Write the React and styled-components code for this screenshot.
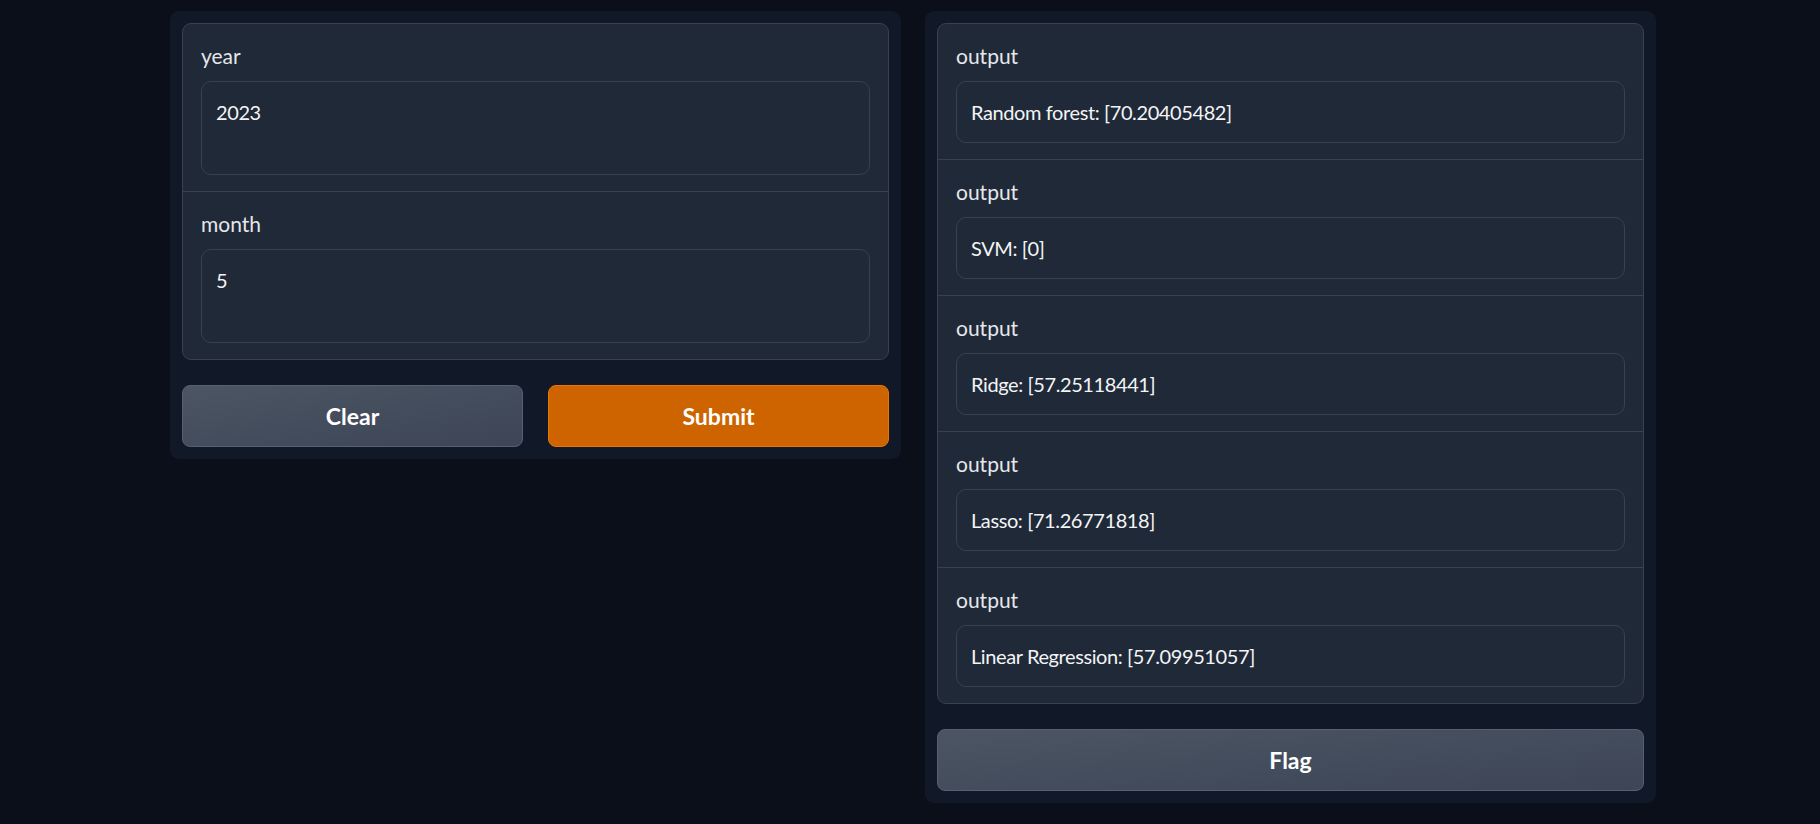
import React from 'react'
import styled, { createGlobalStyle } from 'styled-components'

const GlobalStyle = createGlobalStyle`
  html, body {
    margin: 0;
    padding: 0;
    background: #0b0f19;
    font-family: "Lato", "Open Sans", sans-serif;
  }
  * { box-sizing: border-box; }
`

const Page = styled.div`
  display: flex;
  align-items: flex-start;
  gap: 24px;
  padding-top: 11px;
  margin-left: 170px;
  min-height: 824px;
`

const Panel = styled.div`
  width: 731px;
  background: #111827;
  border-radius: 9px;
  padding: 12px;
  display: flex;
  flex-direction: column;
  gap: 25px;
`

const Block = styled.div`
  background: #1f2937;
  border: 1px solid #374151;
  border-radius: 9px;
  overflow: hidden;
`

const Field = styled.div`
  padding: 16px 18px 16px;
  & + & {
    border-top: 1px solid #374151;
  }
`

const Label = styled.div`
  font-size: 21px;
  line-height: 31px;
  color: #e5e7eb;
  margin-bottom: 10px;
`

const Box = styled.div`
  background: #1f2937;
  border: 1px solid #374151;
  border-radius: 10px;
  padding: 15px 14px;
  font-size: 20px;
  letter-spacing: -0.4px;
  line-height: 31px;
  color: #f3f4f6;
  height: ${p => (p.lines > 1 ? p.lines * 31 + 32 : 62)}px;
`

const ButtonRow = styled.div`
  display: grid;
  grid-template-columns: 1fr 1fr;
  gap: 25px;
`

const Button = styled.button`
  height: 62px;
  border-radius: 8px;
  font-family: inherit;
  font-weight: 700;
  font-size: 23px;
  color: #ffffff;
  cursor: pointer;
  border: 1px solid ${p => (p.primary ? '#ee7400' : '#576071')};
  background: ${p =>
    p.primary ? '#ce6400' : 'linear-gradient(to bottom right, #4b5563, #3d4556)'};
`

const inputs = [
  { label: 'year', value: '2023' },
  { label: 'month', value: '5' },
]

const outputs = [
  'Random forest: [70.20405482]',
  'SVM: [0]',
  'Ridge: [57.25118441]',
  'Lasso: [71.26771818]',
  'Linear Regression: [57.09951057]',
]

export default function App() {
  return (
    <>
      <GlobalStyle />
      <Page>
        <Panel>
          <Block>
            {inputs.map(f => (
              <Field key={f.label}>
                <Label>{f.label}</Label>
                <Box lines={2}>{f.value}</Box>
              </Field>
            ))}
          </Block>
          <ButtonRow>
            <Button>Clear</Button>
            <Button primary>Submit</Button>
          </ButtonRow>
        </Panel>
        <Panel>
          <Block>
            {outputs.map((o, i) => (
              <Field key={i}>
                <Label>output</Label>
                <Box lines={1}>{o}</Box>
              </Field>
            ))}
          </Block>
          <Button>Flag</Button>
        </Panel>
      </Page>
    </>
  )
}
